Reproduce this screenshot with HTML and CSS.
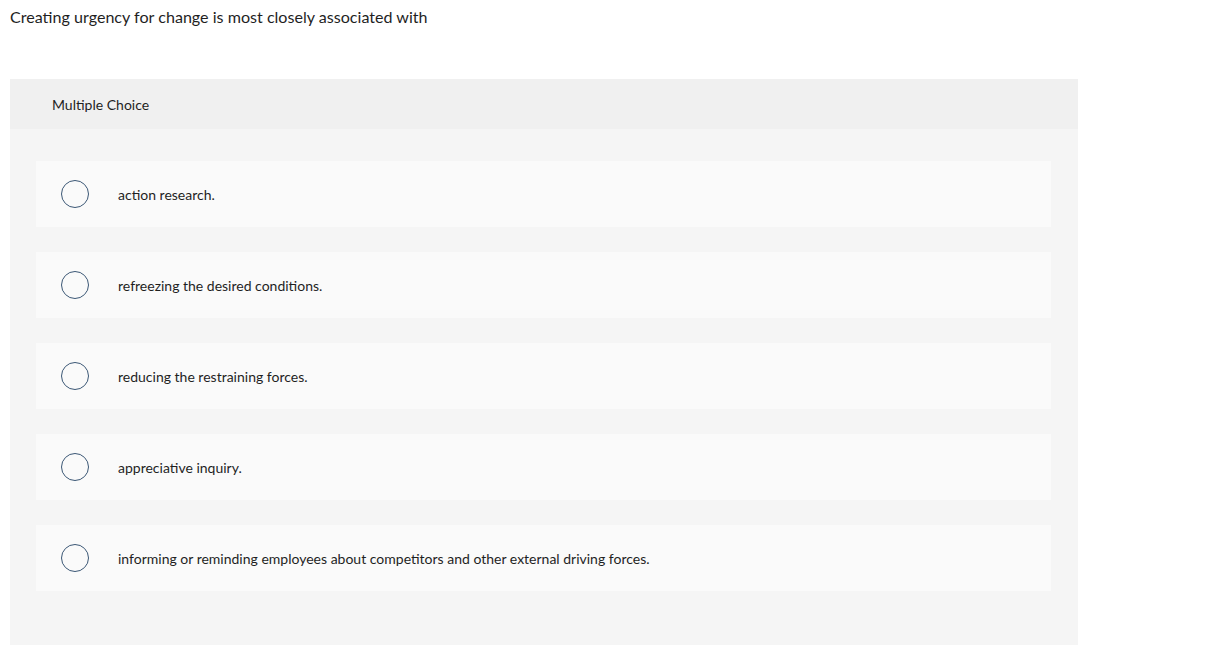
FILE: index.html
```html
<!DOCTYPE html>
<html>
<head>
<meta charset="utf-8">
<link rel="stylesheet" href="styles.css">
</head>
<body>
<p class="question">Creating urgency for change is most closely associated with</p>
<div class="panel">
  <div class="panel-head">Multiple Choice</div>
  <div class="options">
    <div class="option"><span class="radio"></span><span class="label">action research.</span></div>
    <div class="option"><span class="radio"></span><span class="label">refreezing the desired conditions.</span></div>
    <div class="option"><span class="radio"></span><span class="label">reducing the restraining forces.</span></div>
    <div class="option"><span class="radio"></span><span class="label">appreciative inquiry.</span></div>
    <div class="option"><span class="radio"></span><span class="label">informing or reminding employees about competitors and other external driving forces.</span></div>
  </div>
</div>
</body>
</html>
```
FILE: styles.css
```css
html, body { margin: 0; padding: 0; background: #fff; }
body { font-family: Lato, "Open Sans", sans-serif; color: #1f1f1f; }
.question { margin: 0; padding: 7px 10px 0; font-size: 16.1px; line-height: 20px; height: 79px; box-sizing: border-box; }
.panel { margin-left: 10px; width: 1068px; background: #f5f5f5; height: 566px; }
.panel-head { height: 50px; background: #f0f0f0; padding-left: 42px; display: flex; align-items: center; font-size: 14px; }
.options { padding: 32px 27px 0 26px; display: flex; flex-direction: column; gap: 25px; }
.option { height: 66px; background: #fafafa; display: flex; align-items: center; font-size: 14px; }
.radio { width: 26px; height: 26px; border: 1.5px solid #3b5775; border-radius: 50%; margin-left: 25px; flex: none; }
.label { margin-left: 29px; }
```
